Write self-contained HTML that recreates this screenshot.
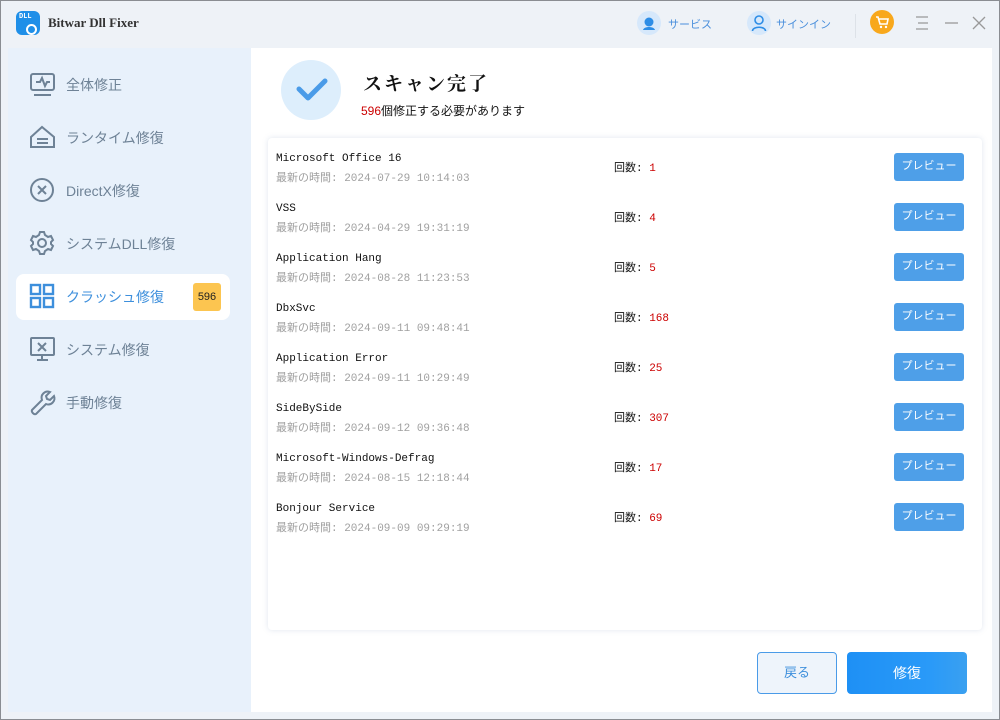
<!DOCTYPE html>
<html><head><meta charset="utf-8"><style>
*{margin:0;padding:0;box-sizing:border-box}
body{width:1000px;height:720px;overflow:hidden;background:#eef2f7;font-family:"Liberation Mono","Noto Sans CJK JP",monospace;position:relative;box-shadow:inset 0 0 0 1px #8a8d92}
.abs{position:absolute}
.side{left:8px;top:48px;width:243px;height:664px;background:#e8f1fb}
.main{left:251px;top:48px;width:741px;height:664px;background:#fff}
.nav{position:absolute;left:8px;width:214px;height:46px;font-size:14px;color:#6e8296;font-family:"Liberation Sans","Noto Sans CJK JP",sans-serif}
.nav span{position:absolute;left:50px;top:13px;line-height:20px}
.nav svg{position:absolute;left:13px;top:9px}
.card{left:268px;top:138px;width:714px;height:492px;background:#fff;box-shadow:0 0 6px rgba(150,170,200,.3);border-radius:4px}
.row{position:absolute;left:8px;width:700px;height:50px;font-size:11px;line-height:14px}
.t{position:absolute;left:0;top:4px;color:#111}
.d{position:absolute;left:0;top:24px;color:#a0a0a0}
.c{position:absolute;left:338px;top:14px;color:#111}
.c b{color:#c00;font-weight:normal}
.p{position:absolute;left:618px;top:5px;width:70px;height:28px;background:#4e9fe8;border-radius:3px;color:#fff;font-size:11px;text-align:center;line-height:28px}
</style></head><body>
<div class="abs" style="left:16px;top:11px;width:24px;height:24px;background:#1f8fe8;border-radius:6px"></div>
<div class="abs" style="left:19px;top:13px;font-size:7px;color:#fff;font-weight:bold">DLL</div>
<div class="abs" style="left:26px;top:24px;width:11px;height:11px;background:#1f8fe8;border:2px solid #fff;border-radius:50%"></div>
<div class="abs" style="left:48px;top:15px;font-size:13px;color:#333;font-family:'Liberation Serif',serif;font-weight:bold">Bitwar Dll Fixer</div>
<div class="abs" style="left:637px;top:11px;width:24px;height:24px;border-radius:50%;background:#d6e8fb"></div>
<svg class="abs" style="left:641px;top:15px" width="16" height="16"><circle cx="8" cy="7" r="4.5" fill="#2d8de6"/><path d="M2 15c1-4 11-4 12 0z" fill="#2d8de6"/></svg>
<div class="abs" style="left:668px;top:16px;font-size:11px;color:#4a8fdc">サービス</div>
<div class="abs" style="left:747px;top:11px;width:24px;height:24px;border-radius:50%;background:#d6e8fb"></div>
<svg class="abs" style="left:751px;top:14px" width="16" height="18" fill="none" stroke="#2d8de6" stroke-width="1.6"><circle cx="8" cy="6" r="4"/><path d="M1.5 17c0-5 13-5 13 0"/></svg>
<div class="abs" style="left:776px;top:16px;font-size:11px;color:#4a8fdc">サインイン</div>
<div class="abs" style="left:855px;top:14px;width:1px;height:24px;background:#dde2e8"></div>
<div class="abs" style="left:870px;top:10px;width:24px;height:24px;border-radius:50%;background:#f8a81c"></div>
<svg class="abs" style="left:875px;top:15px" width="14" height="14"><path d="M1 2h2l2 7h7l1-5H4" fill="none" stroke="#fff" stroke-width="1.6"/><circle cx="6" cy="12" r="1.2" fill="#fff"/><circle cx="11" cy="12" r="1.2" fill="#fff"/></svg>
<svg class="abs" style="left:915px;top:15px" width="72" height="16" stroke="#999" stroke-width="1.3" fill="none"><path d="M1 2h12M3 8h10M1 14h12"/><path d="M30 8h13"/><path d="M58 2l12 12M70 2L58 14"/></svg>
<div class="abs side"></div>
<div class="nav" style="top:62px;left:16px"><svg width="28" height="28" fill="none" stroke="#6e8296" stroke-width="2"><rect x="2" y="3" width="23" height="16" rx="2"/><path d="M5 24h17M7 11h4l2-4 3 8 2-4h3"/></svg><span>全体修正</span></div>
<div class="nav" style="top:115px;left:16px"><svg width="28" height="28" fill="none" stroke="#6e8296" stroke-width="2"><path d="M2 13L13 3l12 10v10H2z"/><path d="M8 15h11M8 19h11"/></svg><span>ランタイム修復</span></div>
<div class="nav" style="top:168px;left:16px"><svg width="28" height="28" fill="none" stroke="#6e8296" stroke-width="2"><circle cx="13" cy="13" r="11"/><path d="M9 9l8 8M17 9l-8 8"/></svg><span>DirectX修復</span></div>
<div class="nav" style="top:221px;left:16px"><svg width="28" height="28" fill="none" stroke="#6e8296" stroke-width="2"><circle cx="13" cy="13" r="4"/><path d="M11 2h4l1 3 3 2 3-1 2 4-2 2v2l2 2-2 4-3-1-3 2-1 3h-4l-1-3-3-2-3 1-2-4 2-2v-2l-2-2 2-4 3 1 3-2z"/></svg><span>システムDLL修復</span></div>
<div class="nav" style="top:274px;left:16px;background:#fff;border-radius:8px;color:#3d8fdc"><svg width="28" height="28" fill="none" stroke="#3d8fdc" stroke-width="2.4"><rect x="2" y="2" width="9" height="9"/><rect x="15" y="2" width="9" height="9"/><rect x="2" y="15" width="9" height="9"/><rect x="15" y="15" width="9" height="9"/></svg><span>クラッシュ修復</span><div style="position:absolute;left:177px;top:9px;width:28px;height:28px;background:#fcc550;border-radius:3px;color:#222;font-size:11px;text-align:center;line-height:28px;font-family:'Liberation Sans',sans-serif">596</div></div>
<div class="nav" style="top:327px;left:16px"><svg width="28" height="28" fill="none" stroke="#6e8296" stroke-width="2"><rect x="2" y="2" width="23" height="17" rx="1"/><path d="M9 7l8 8M17 7l-8 8M8 24h11M13 19v5"/></svg><span>システム修復</span></div>
<div class="nav" style="top:380px;left:16px"><svg width="28" height="28" fill="none" stroke="#6e8296" stroke-width="2"><path d="M3 21l10-10c-2-5 3-10 8-8l-4 4 1 3 3 1 4-4c2 5-3 10-8 8L7 25c-2 1-5-2-4-4z"/></svg><span>手動修復</span></div>
<div class="abs main"></div>
<div class="abs" style="left:281px;top:60px;width:60px;height:60px;border-radius:50%;background:#ddeefc"></div>
<svg class="abs" style="left:295px;top:77px" width="34" height="26"><path d="M4 12l9 9L30 4" fill="none" stroke="#4a9be8" stroke-width="5" stroke-linecap="round" stroke-linejoin="round"/></svg>
<div class="abs" style="left:363px;top:69px;font-size:19px;color:#111;font-family:'Liberation Serif','Noto Serif CJK SC',serif;font-weight:bold;letter-spacing:2px">スキャン完了</div>
<div class="abs" style="left:361px;top:102px;font-size:12px;color:#111;font-family:'Liberation Sans','Noto Sans CJK JP',sans-serif"><span style="color:#c00">596</span>個修正する必要があります</div>
<div class="abs card">
<div class="row" style="top:10px"><div class="t">Microsoft Office 16</div><div class="d">最新の時間: 2024-07-29 10:14:03</div><div class="c">回数: <b>1</b></div><div class="p">プレビュー</div></div>
<div class="row" style="top:60px"><div class="t">VSS</div><div class="d">最新の時間: 2024-04-29 19:31:19</div><div class="c">回数: <b>4</b></div><div class="p">プレビュー</div></div>
<div class="row" style="top:110px"><div class="t">Application Hang</div><div class="d">最新の時間: 2024-08-28 11:23:53</div><div class="c">回数: <b>5</b></div><div class="p">プレビュー</div></div>
<div class="row" style="top:160px"><div class="t">DbxSvc</div><div class="d">最新の時間: 2024-09-11 09:48:41</div><div class="c">回数: <b>168</b></div><div class="p">プレビュー</div></div>
<div class="row" style="top:210px"><div class="t">Application Error</div><div class="d">最新の時間: 2024-09-11 10:29:49</div><div class="c">回数: <b>25</b></div><div class="p">プレビュー</div></div>
<div class="row" style="top:260px"><div class="t">SideBySide</div><div class="d">最新の時間: 2024-09-12 09:36:48</div><div class="c">回数: <b>307</b></div><div class="p">プレビュー</div></div>
<div class="row" style="top:310px"><div class="t">Microsoft-Windows-Defrag</div><div class="d">最新の時間: 2024-08-15 12:18:44</div><div class="c">回数: <b>17</b></div><div class="p">プレビュー</div></div>
<div class="row" style="top:360px"><div class="t">Bonjour Service</div><div class="d">最新の時間: 2024-09-09 09:29:19</div><div class="c">回数: <b>69</b></div><div class="p">プレビュー</div></div>
</div>
<div class="abs" style="left:757px;top:652px;width:80px;height:42px;border:1px solid #4a9be8;border-radius:4px;background:#eef4fb;color:#3d8fdc;font-size:13px;text-align:center;line-height:40px;font-family:'Liberation Sans','Noto Sans CJK JP',sans-serif">戻る</div>
<div class="abs" style="left:847px;top:652px;width:120px;height:42px;border-radius:4px;background:linear-gradient(90deg,#1e90f5,#2a9af8 70%,#3aa0f0);color:#fff;font-size:14px;text-align:center;line-height:42px;font-family:'Liberation Sans','Noto Sans CJK JP',sans-serif">修復</div>
</body></html>
